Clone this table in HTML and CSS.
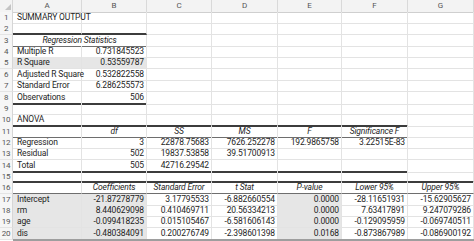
FILE: index.html
```html
<!DOCTYPE html>
<html>
<head>
<meta charset="utf-8">
<link rel="stylesheet" href="styles.css">
</head>
<body>
<div class="sheet">
  <div class="row hdr">
    <div class="corner"><svg width="13" height="12" viewBox="0 0 13 12"><polygon points="11,4 11,10 5,10" fill="#c4c4c4"/></svg></div>
    <div class="col">A</div><div class="col">B</div><div class="col">C</div><div class="col">D</div><div class="col">E</div><div class="col">F</div><div class="col">G</div>
  </div>
  <div class="row">
    <div class="rn">1</div><div class="cell">SUMMARY OUTPUT</div><div class="cell"></div><div class="cell"></div><div class="cell"></div><div class="cell"></div><div class="cell"></div><div class="cell"></div>
  </div>
  <div class="row">
    <div class="rn">2</div><div class="cell thick"></div><div class="cell thick"></div><div class="cell"></div><div class="cell"></div><div class="cell"></div><div class="cell"></div><div class="cell"></div>
  </div>
  <div class="row">
    <div class="rn">3</div><div class="cell span2 head thin">Regression Statistics</div><div class="cell"></div><div class="cell"></div><div class="cell"></div><div class="cell"></div><div class="cell"></div>
  </div>
  <div class="row">
    <div class="rn">4</div><div class="cell">Multiple R</div><div class="cell num">0.731845523</div><div class="cell"></div><div class="cell"></div><div class="cell"></div><div class="cell"></div><div class="cell"></div>
  </div>
  <div class="row">
    <div class="rn">5</div><div class="cell fill">R Square</div><div class="cell num fill">0.53559787</div><div class="cell"></div><div class="cell"></div><div class="cell"></div><div class="cell"></div><div class="cell"></div>
  </div>
  <div class="row">
    <div class="rn">6</div><div class="cell">Adjusted R Square</div><div class="cell num">0.532822558</div><div class="cell"></div><div class="cell"></div><div class="cell"></div><div class="cell"></div><div class="cell"></div>
  </div>
  <div class="row">
    <div class="rn">7</div><div class="cell">Standard Error</div><div class="cell num">6.286255573</div><div class="cell"></div><div class="cell"></div><div class="cell"></div><div class="cell"></div><div class="cell"></div>
  </div>
  <div class="row">
    <div class="rn">8</div><div class="cell thick">Observations</div><div class="cell num thick">506</div><div class="cell"></div><div class="cell"></div><div class="cell"></div><div class="cell"></div><div class="cell"></div>
  </div>
  <div class="row">
    <div class="rn">9</div><div class="cell"></div><div class="cell"></div><div class="cell"></div><div class="cell"></div><div class="cell"></div><div class="cell"></div><div class="cell"></div>
  </div>
  <div class="row">
    <div class="rn">10</div><div class="cell thick">ANOVA</div><div class="cell thick"></div><div class="cell thick"></div><div class="cell thick"></div><div class="cell thick"></div><div class="cell thick"></div><div class="cell"></div>
  </div>
  <div class="row">
    <div class="rn">11</div><div class="cell thin"></div><div class="cell head thin">df</div><div class="cell head thin">SS</div><div class="cell head thin">MS</div><div class="cell head thin">F</div><div class="cell head thin">Significance F</div><div class="cell"></div>
  </div>
  <div class="row">
    <div class="rn">12</div><div class="cell">Regression</div><div class="cell num">3</div><div class="cell num">22878.75683</div><div class="cell num">7626.252278</div><div class="cell num">192.9865758</div><div class="cell num">3.22515E-83</div><div class="cell"></div>
  </div>
  <div class="row">
    <div class="rn">13</div><div class="cell">Residual</div><div class="cell num">502</div><div class="cell num">19837.53858</div><div class="cell num">39.51700913</div><div class="cell"></div><div class="cell"></div><div class="cell"></div>
  </div>
  <div class="row">
    <div class="rn">14</div><div class="cell thick">Total</div><div class="cell num thick">505</div><div class="cell num thick">42716.29542</div><div class="cell thick"></div><div class="cell thick"></div><div class="cell thick"></div><div class="cell"></div>
  </div>
  <div class="row">
    <div class="rn">15</div><div class="cell thick"></div><div class="cell thick"></div><div class="cell thick"></div><div class="cell thick"></div><div class="cell thick"></div><div class="cell thick"></div><div class="cell thick"></div>
  </div>
  <div class="row">
    <div class="rn">16</div><div class="cell thin"></div><div class="cell head thin">Coefficients</div><div class="cell head thin">Standard Error</div><div class="cell head thin">t Stat</div><div class="cell head thin">P-value</div><div class="cell head thin">Lower 95%</div><div class="cell head thin">Upper 95%</div>
  </div>
  <div class="row">
    <div class="rn">17</div><div class="cell fill">Intercept</div><div class="cell num fill">-21.87278779</div><div class="cell num">3.17795533</div><div class="cell num">-6.882660554</div><div class="cell num fill">0.0000</div><div class="cell num">-28.11651931</div><div class="cell num">-15.62905627</div>
  </div>
  <div class="row">
    <div class="rn">18</div><div class="cell fill">rm</div><div class="cell num fill">8.440629098</div><div class="cell num">0.410469711</div><div class="cell num">20.56334213</div><div class="cell num fill">0.0000</div><div class="cell num">7.63417891</div><div class="cell num">9.247079286</div>
  </div>
  <div class="row">
    <div class="rn">19</div><div class="cell fill">age</div><div class="cell num fill">-0.099418235</div><div class="cell num">0.015105467</div><div class="cell num">-6.581606143</div><div class="cell num fill">0.0000</div><div class="cell num">-0.129095959</div><div class="cell num">-0.069740511</div>
  </div>
  <div class="row">
    <div class="rn">20</div><div class="cell fill">dis</div><div class="cell num fill">-0.480384091</div><div class="cell num">0.200276749</div><div class="cell num">-2.398601398</div><div class="cell num fill">0.0168</div><div class="cell num">-0.873867989</div><div class="cell num">-0.086900192</div>
  </div>
  <div class="row endrow">
    <div class="rn-end"></div><div class="bar"></div>
  </div>
</div>
</body>
</html>
```

FILE: styles.css
```css
html, body {
  margin: 0;
  padding: 0;
  background: #ffffff;
}
body {
  width: 474px;
  height: 241px;
  overflow: hidden;
  font-family: Roboto, "Liberation Sans", sans-serif;
  font-size: 8.5px;
  letter-spacing: -0.15px;
  color: #1e1e1e;
}
.sheet {
  display: flex;
  flex-direction: column;
}
.row {
  display: grid;
  grid-template-columns: 13px 69px 65px 65px 66px 64px 66px 66px;
  height: 11.37px;
}
.hdr {
  height: 12px;
}
.corner {
  background: #f3f3f3;
  border-right: 1px solid #d6d6d6;
  border-bottom: 1px solid #cfcfcf;
  box-sizing: border-box;
  line-height: 0;
}
.corner svg {
  display: block;
}
.col {
  background: #f3f3f3;
  border-right: 1px solid #d9d9d9;
  border-bottom: 1px solid #cfcfcf;
  box-sizing: border-box;
  color: #555;
  text-align: center;
  line-height: 11px;
  font-size: 8px;
}
.rn {
  background: #f6f6f6;
  border-right: 1px solid #d6d6d6;
  border-bottom: 1px solid #e4e4e4;
  box-sizing: border-box;
  color: #555;
  text-align: center;
  font-size: 8px;
  line-height: 11px;
  letter-spacing: -0.3px;
}
.cell {
  box-sizing: border-box;
  border-right: 1px solid #e3e3e3;
  border-bottom: 1px solid #e3e3e3;
  padding: 0 2px 0 4px;
  line-height: 11px;
  white-space: nowrap;
  overflow: visible;
}
.num {
  text-align: right;
}
.head {
  font-style: italic;
  text-align: center;
  padding: 0 1px;
}
.span2 {
  grid-column: span 2;
}
.fill {
  background: #e6e6e6;
}
.thick {
  border-bottom: 2px solid #3c3c3c;
}
.thin {
  border-bottom: 1px solid #6e6e6e;
}
.endrow {
  height: 2px;
}
.bar {
  grid-column: span 7;
  background: #9e9e9e;
}
```
